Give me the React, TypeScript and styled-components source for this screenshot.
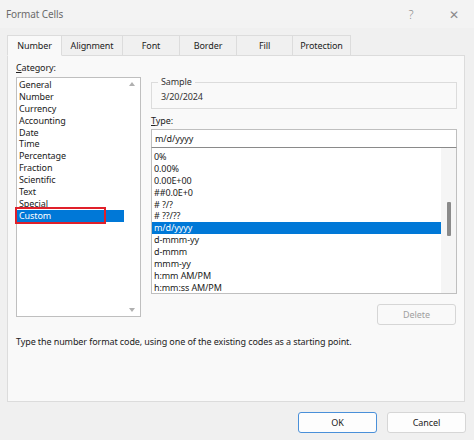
import React from "react";
import styled, { createGlobalStyle } from "styled-components";

const Global = createGlobalStyle`
  html, body { margin: 0; padding: 0; background: #f0f0f0; }
  body { font-family: "Noto Sans", "Open Sans", sans-serif; font-size: 9px; letter-spacing: -0.1px; color: #1b1b1b; }
  * { box-sizing: border-box; }
`;

const Dialog = styled.div`
  width: 474px;
  height: 440px;
  background: #f0f0f0;
  display: flex;
  flex-direction: column;
  overflow: hidden;
`;

const TitleBar = styled.div`
  height: 28px;
  display: flex;
  align-items: center;
  padding-left: 6px;
  background: #f3f3f3;
  color: #6b6b6b;
  font-size: 10px;
`;

const Title = styled.span`
  flex: 1;
`;

const TitleButton = styled.span<{ $w: number }>`
  width: ${(p) => p.$w}px;
  text-align: center;
  color: #8a8a8a;
  font-size: 12px;
  font-weight: 300;
`;

const Tabs = styled.div`
  display: flex;
  margin: 6px 0 0 7px;
  height: 21px;
  align-items: flex-end;
`;

const Tab = styled.div<{ $w: number; $active?: boolean }>`
  width: ${(p) => p.$w}px;
  height: ${(p) => (p.$active ? 21 : 20)}px;
  display: flex;
  align-items: center;
  justify-content: center;
  border: 1px solid #dcdcdc;
  border-bottom: ${(p) => (p.$active ? "1px solid #f9f9f9" : "none")};
  border-left: ${(p) => (p.$active ? "1px solid #dcdcdc" : "none")};
  background: ${(p) => (p.$active ? "#f9f9f9" : "#f0f0f0")};
  margin-bottom: ${(p) => (p.$active ? "-1px" : "0")};
  position: relative;
  z-index: ${(p) => (p.$active ? 1 : 0)};
  color: #222;
`;

const Panel = styled.div`
  margin: 0 9px 0 7px;
  height: 347px;
  border: 1px solid #dcdcdc;
  background: #f9f9f9;
  padding: 5px 7px 0 8px;
  display: flex;
  flex-direction: column;
`;

const Columns = styled.div`
  display: flex;
  gap: 10px;
`;

const LeftCol = styled.div`
  width: 125px;
  display: flex;
  flex-direction: column;
`;

const RightCol = styled.div`
  width: 306px;
  display: flex;
  flex-direction: column;
  padding-top: 15px;
`;

const Label = styled.div`
  height: 16px;
  line-height: 14px;
  color: #222;
`;

const U = styled.span`
  text-decoration: underline;
`;

const ListBox = styled.div<{ $h: number }>`
  position: relative;
  height: ${(p) => p.$h}px;
  background: #ffffff;
  border: 1px solid #bfbfbf;
  display: flex;
`;

const Items = styled.div`
  flex: 1;
  padding-top: 1px;
  display: flex;
  flex-direction: column;
`;

const Item = styled.div<{ $sel?: boolean }>`
  height: 11.9px;
  line-height: 11.9px;
  padding-left: 2px;
  white-space: nowrap;
  background: ${(p) => (p.$sel ? "#0078d7" : "transparent")};
  color: ${(p) => (p.$sel ? "#ffffff" : "#1b1b1b")};
`;

const Highlight = styled.div`
  position: absolute;
  left: -2px;
  top: 129px;
  width: 91px;
  height: 17px;
  border: 2px solid #e0202a;
`;

const ScrollTrack = styled.div`
  width: 16px;
  background: #ffffff;
  display: flex;
  flex-direction: column;
  justify-content: space-between;
  align-items: center;
  padding: 4px 0;
`;

const Arrow = styled.div<{ $down?: boolean }>`
  width: 0;
  height: 0;
  border-left: 3.5px solid transparent;
  border-right: 3.5px solid transparent;
  ${(p) =>
    p.$down
      ? "border-top: 4px solid #b0b0b0;"
      : "border-bottom: 4px solid #b0b0b0;"}
`;

const Fieldset = styled.fieldset`
  margin: 0;
  height: 33px;
  border: 1px solid #dcdcdc;
  padding: 2px 8px 0 9px;
`;

const Legend = styled.legend`
  padding: 0 3px;
  margin-left: -3px;
  color: #333;
  line-height: 12px;
`;

const SampleText = styled.div`
  color: #333;
  line-height: 14px;
`;

const TypeLabel = styled.div`
  margin-top: 5px;
  height: 15px;
  line-height: 14px;
  color: #222;
`;

const Input = styled.div`
  height: 19px;
  background: #ffffff;
  border: 1px solid #bfbfbf;
  border-bottom-color: #8a8a8a;
  padding-left: 3px;
  line-height: 17px;
`;

const CodeList = styled.div`
  height: 146px;
  background: #ffffff;
  border: 1px solid #bfbfbf;
  border-top: none;
  display: flex;
  overflow: hidden;
`;

const CodeItems = styled.div`
  flex: 1;
  padding-top: 3px;
  display: flex;
  flex-direction: column;
`;

const VScroll = styled.div`
  width: 15px;
  background: #f5f5f5;
  display: flex;
  justify-content: center;
  padding-top: 54px;
`;

const Thumb = styled.div`
  width: 4px;
  height: 34px;
  background: #8a8a8a;
  border-radius: 1px;
`;

const DeleteRow = styled.div`
  display: flex;
  justify-content: flex-end;
  margin-top: 10px;
  padding-right: 1px;
`;

const Button = styled.div<{ $primary?: boolean; $disabled?: boolean }>`
  width: 79px;
  height: 21px;
  display: flex;
  align-items: center;
  justify-content: center;
  background: ${(p) => (p.$disabled ? "#f9f9f9" : "#fdfdfd")};
  border: 1px solid ${(p) => (p.$primary ? "#4a90d9" : "#d6d6d6")};
  border-radius: 3px;
  color: ${(p) => (p.$disabled ? "#a0a0a0" : "#1b1b1b")};
`;

const Description = styled.div`
  margin-top: 10px;
  color: #222;
`;

const Footer = styled.div`
  display: flex;
  justify-content: flex-end;
  gap: 10px;
  padding: 10px 8px 0 0;
`;

const categories = [
  "General",
  "Number",
  "Currency",
  "Accounting",
  "Date",
  "Time",
  "Percentage",
  "Fraction",
  "Scientific",
  "Text",
  "Special",
  "Custom",
];

const codes = [
  "0%",
  "0.00%",
  "0.00E+00",
  "##0.0E+0",
  "# ?/?",
  "# ??/??",
  "m/d/yyyy",
  "d-mmm-yy",
  "d-mmm",
  "mmm-yy",
  "h:mm AM/PM",
  "h:mm:ss AM/PM",
];

export default function App() {
  return (
    <>
      <Global />
      <Dialog>
        <TitleBar>
          <Title>Format Cells</Title>
          <TitleButton $w={46}>?</TitleButton>
          <TitleButton $w={40}>✕</TitleButton>
        </TitleBar>
        <Tabs>
          <Tab $w={55} $active>Number</Tab>
          <Tab $w={61}>Alignment</Tab>
          <Tab $w={57}>Font</Tab>
          <Tab $w={57}>Border</Tab>
          <Tab $w={56}>Fill</Tab>
          <Tab $w={58}>Protection</Tab>
        </Tabs>
        <Panel>
          <Columns>
            <LeftCol>
              <Label>
                <U>C</U>ategory:
              </Label>
              <ListBox $h={240}>
                <Items>
                  {categories.map((c) => (
                    <Item key={c} $sel={c === "Custom"}>
                      {c}
                    </Item>
                  ))}
                </Items>
                <ScrollTrack>
                  <Arrow />
                  <Arrow $down />
                </ScrollTrack>
                <Highlight />
              </ListBox>
            </LeftCol>
            <RightCol>
              <Fieldset>
                <Legend>Sample</Legend>
                <SampleText>3/20/2024</SampleText>
              </Fieldset>
              <TypeLabel>
                <U>T</U>ype:
              </TypeLabel>
              <Input>m/d/yyyy</Input>
              <CodeList>
                <CodeItems>
                  {codes.map((c) => (
                    <Item key={c} $sel={c === "m/d/yyyy"}>
                      {c}
                    </Item>
                  ))}
                </CodeItems>
                <VScroll>
                  <Thumb />
                </VScroll>
              </CodeList>
              <DeleteRow>
                <Button $disabled>Delete</Button>
              </DeleteRow>
            </RightCol>
          </Columns>
          <Description>
            Type the number format code, using one of the existing codes as a starting point.
          </Description>
        </Panel>
        <Footer>
          <Button $primary>OK</Button>
          <Button>Cancel</Button>
        </Footer>
      </Dialog>
    </>
  );
}
